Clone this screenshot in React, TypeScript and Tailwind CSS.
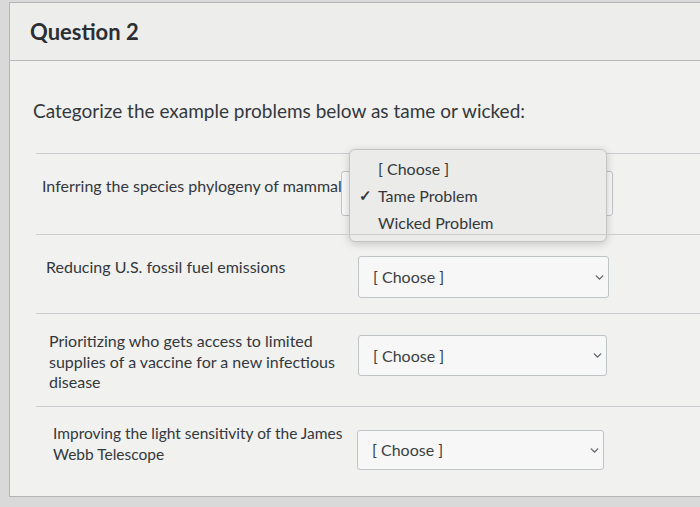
import { ChevronDown } from 'lucide-react'

const rows = [
  { text: 'Reducing U.S. fossil fuel emissions', fs: 'text-[16px]', h: 'h-[79px]', pt: 'pt-[22px]', pl: 'pl-[10px]', selTop: 'mt-[21px]', selH: 'h-[42px]', selW: 'w-[251px]', selLeft: 'left-[322px]' },
  { text: 'Prioritizing who gets access to limited supplies of a vaccine for a new infectious disease', fs: 'text-[16px]', h: 'h-[93px]', pt: 'pt-[17px]', pl: 'pl-[13px]', selTop: 'mt-[21px]', selH: 'h-[41px]', selW: 'w-[249px]', selLeft: 'left-[322px]' },
  { text: 'Improving the light sensitivity of the James Webb Telescope', fs: 'text-[15.5px]', h: 'h-[75px]', pt: 'pt-[16px]', pl: 'pl-[17px]', selTop: 'mt-[23px]', selH: 'h-[40px]', selW: 'w-[247px]', selLeft: 'left-[321px]' },
]

function Select({ className }: { className: string }) {
  return (
    <div className={`absolute flex items-center justify-between rounded-[3px] border border-[#bfc4c7] bg-[#f7f7f7] pl-[14px] pr-[2px] ${className}`}>
      <span className="text-[16px] text-[#3a3f44]">[ Choose ]</span>
      <ChevronDown className="h-[13px] w-[13px] text-[#5f6469]" strokeWidth={2.5} />
    </div>
  )
}

export default function App() {
  return (
    <div className="h-[507px] w-[700px] overflow-hidden bg-[#d9d9d9] pl-[9px] pt-[2px]" style={{ fontFamily: 'Lato, "Liberation Sans", sans-serif' }}>
      <div className="h-[495px] w-[720px] border border-[#b4b4b4] bg-[#f1f1f0]">
        <div className="flex h-[58px] items-center border-b border-[#b9b9b9] bg-[#ededec] pl-[20px]">
          <h2 className="text-[22px] font-bold text-[#2b2f33]">Question 2</h2>
        </div>

        <div className="pl-[23px] pt-[37px]">
          <p className="text-[19px] leading-[26px] text-[#33383d]">Categorize the example problems below as tame or wicked:</p>
        </div>

        <div className="ml-[26px] mt-[29px]">
          {/* row with open dropdown */}
          <div className="relative h-[81px] border-t border-[#c9cdd0]">
            <p className="pl-[6px] pt-[22px] text-[16px] leading-[20px] text-[#33383d]">Inferring the species phylogeny of mammal</p>
            <div className="absolute left-[305px] top-[17px] h-[45px] w-[272px] rounded-[3px] border border-[#bfc4c7] bg-[#f7f7f7]" />
            <div className="absolute left-[313px] top-[-5px] flex h-[93px] w-[258px] flex-col justify-center rounded-[6px] border border-[#c4c4c4] bg-[#ebebea] pl-[28px] shadow-[0_2px_8px_rgba(0,0,0,0.18)]">
              <span className="text-[16px] leading-[27px] text-[#34383c]">[ Choose ]</span>
              <span className="relative text-[16px] leading-[27px] text-[#34383c]">
                <span className="absolute left-[-19px] top-0 text-[15px] font-bold">✓</span>
                Tame Problem
              </span>
              <span className="text-[16px] leading-[27px] text-[#34383c]">Wicked Problem</span>
            </div>
          </div>

          {rows.map((r, i) => (
            <div key={i} className={`relative border-t border-[#c9cdd0] ${r.h}`}>
              <p className={`w-[318px] leading-[20.5px] text-[#33383d] ${r.fs} ${r.pt} ${r.pl}`}>{r.text}</p>
              <Select className={`top-0 ${r.selTop} ${r.selH} ${r.selW} ${r.selLeft}`} />
            </div>
          ))}
        </div>
      </div>
    </div>
  )
}
